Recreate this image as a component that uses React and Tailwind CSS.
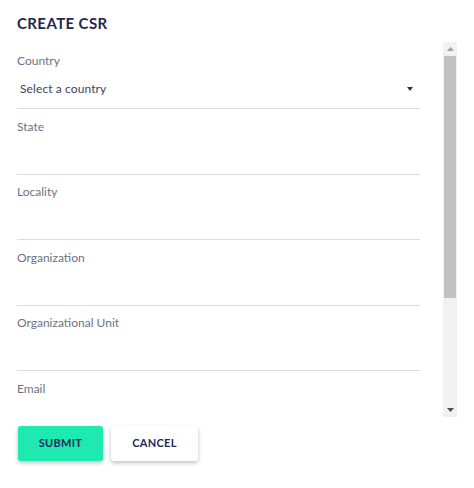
import React from 'react';

const fields = ['State', 'Locality', 'Organization', 'Organizational Unit', 'Email'];

function Field({ label, children }) {
  return (
    <div className="mb-[9.5px]">
      <div className="h-4 text-[12px] leading-4 text-[#6d7184]">{label}</div>
      <div className="flex h-[40px] items-center border-b border-[#dcdcdc]">{children}</div>
    </div>
  );
}

export default function App() {
  return (
    <div className="h-[488px] w-[474px] bg-white" style={{ fontFamily: 'Lato, "Noto Sans", sans-serif' }}>
      <h1 className="px-[17px] pt-[13px] text-[15px] font-bold leading-5 tracking-[0.4px] text-[#222a4c]">CREATE CSR</h1>

      <div className="mt-[9px] flex h-[375px]">
        <div className="flex-1 overflow-hidden pl-[17px] pr-[23px] pt-[11px]">
          <Field label="Country">
            <div className="flex w-full items-center justify-between pl-[3px] pr-[7px] text-[12px] tracking-[0.1px] text-[#40445a]">
              <span>Select a country</span>
              <svg width="6" height="4" viewBox="0 0 6 4">
                <path d="M0 0h6L3 4z" fill="#333" />
              </svg>
            </div>
          </Field>
          {fields.map((f) => (
            <Field key={f} label={f} />
          ))}
        </div>

        {/* scrollbar */}
        <div className="mr-[17px] flex w-[14px] flex-col bg-[#f1f1f1]">
          <div className="flex h-[14px] items-center justify-center">
            <svg width="7" height="4" viewBox="0 0 7 4">
              <path d="M0 4h7L3.5 0z" fill="#a3a3a3" />
            </svg>
          </div>
          <div className="mx-[1px] h-[242px] bg-[#c1c1c1]" />
          <div className="flex-1" />
          <div className="flex h-[14px] items-center justify-center">
            <svg width="7" height="4" viewBox="0 0 7 4">
              <path d="M0 0h7L3.5 4z" fill="#505050" />
            </svg>
          </div>
        </div>
      </div>

      <div className="flex gap-2 pl-[18px] pt-[9px]">
        <button className="h-[35px] w-[85px] rounded-[3px] bg-[#1de9b0] text-[11px] font-bold tracking-[0.3px] text-[#232a58] shadow-[0_2px_4px_rgba(0,0,0,0.25)]">
          SUBMIT
        </button>
        <button className="h-[35px] w-[87px] rounded-[3px] bg-white text-[11px] font-bold tracking-[0.3px] text-[#232a58] shadow-[0_2px_4px_rgba(0,0,0,0.25)]">
          CANCEL
        </button>
      </div>
    </div>
  );
}
